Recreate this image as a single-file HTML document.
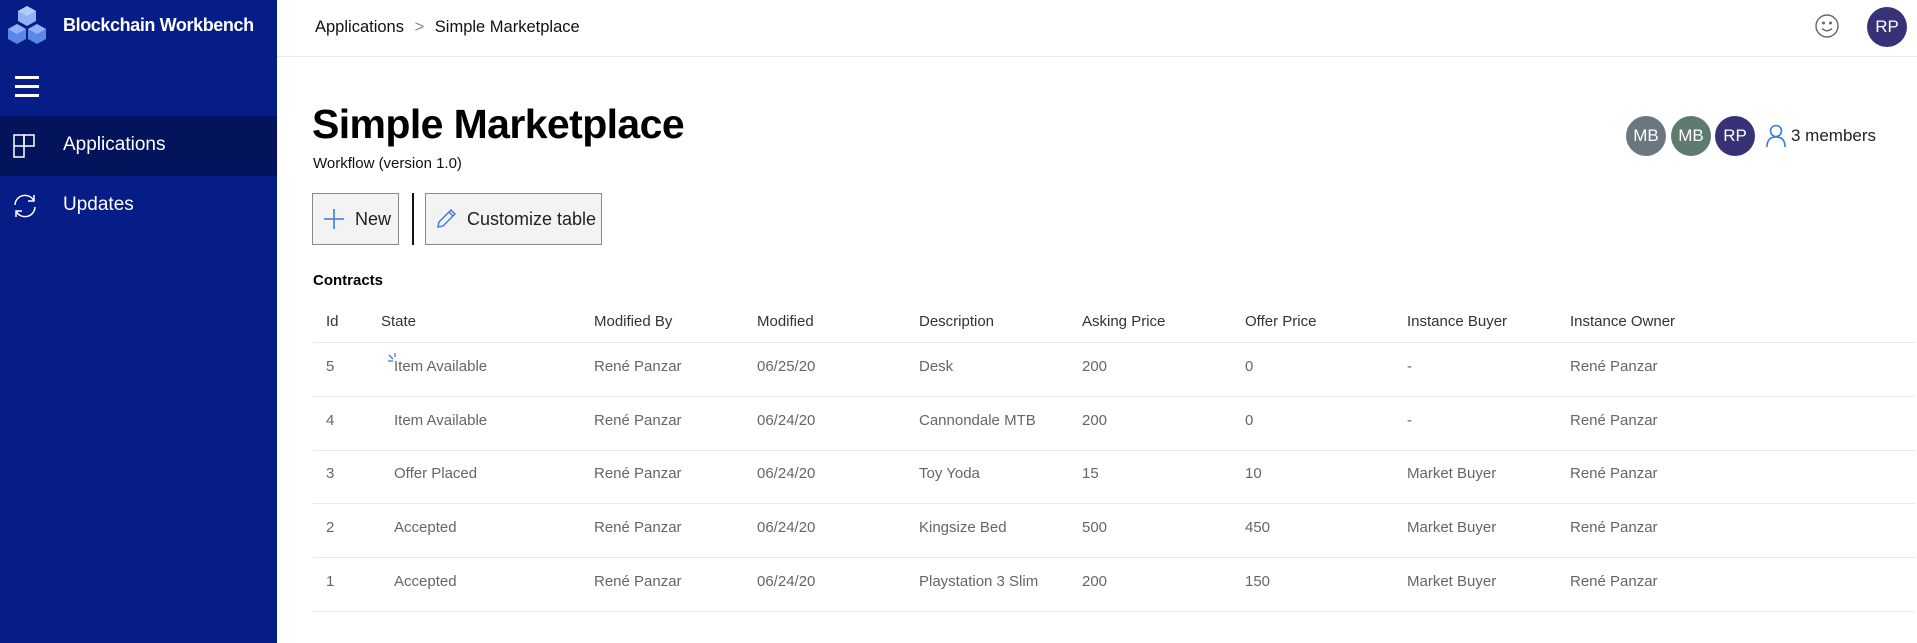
<!DOCTYPE html>
<html><head><meta charset="utf-8"><style>
*{margin:0;padding:0;box-sizing:border-box}
body{width:1917px;height:643px;overflow:hidden;font-family:"Liberation Sans",sans-serif;background:#fff;position:relative;color:#000}
.abs{position:absolute;white-space:nowrap}
#side{position:absolute;left:0;top:0;width:277px;height:643px;background:#061c86}
.av{position:absolute;border-radius:50%;color:#fff;font-size:17px;display:flex;align-items:center;justify-content:center;width:40px;height:40px}
.btn{position:absolute;top:193px;height:52px;border:1px solid #8a8a8a;background:#f3f3f3;font-size:18px;color:#222;display:flex;align-items:center}
.th{position:absolute;top:313px;font-size:15px;color:#333}
.td{position:absolute;font-size:15px;color:#666}
.line{position:absolute;left:313px;width:1602px;height:1px;background:#e8e8e8}
</style></head><body>
<div id="side">
<svg class="abs" style="left:5px;top:5px" width="44" height="42" viewBox="0 0 44 42">
<polygon points="22,1 31,6 31,16 22,21 13,16 13,6" fill="#8fb1f5"/>
<polygon points="22,1 31,6 22,11 13,6" fill="#b5cbf8"/>
<polygon points="12,19 21,24 21,34 12,39 3,34 3,24" fill="#5b87ea"/>
<polygon points="12,19 21,24 12,29 3,24" fill="#8fb1f5"/>
<polygon points="32,19 41,24 41,34 32,39 23,34 23,24" fill="#5b87ea"/>
<polygon points="32,19 41,24 32,29 23,24" fill="#8fb1f5"/>
</svg>
<div class="abs" style="left:63px;top:15px;font-size:18px;color:#fff;font-weight:bold;letter-spacing:-0.4px">Blockchain Workbench</div>
<div class="abs" style="left:15px;top:76px;width:24px;height:3px;background:#fff"></div>
<div class="abs" style="left:15px;top:85px;width:24px;height:3px;background:#fff"></div>
<div class="abs" style="left:15px;top:94px;width:24px;height:3px;background:#fff"></div>
<div class="abs" style="left:0;top:116px;width:277px;height:60px;background:#03135c"></div>
<svg class="abs" style="left:13px;top:134px" width="22" height="24" viewBox="0 0 22 24" fill="none" stroke="#fff" stroke-width="1.5"><rect x="1" y="1" width="10" height="22"/><rect x="11" y="1" width="10" height="11"/><line x1="1" y1="12" x2="11" y2="12"/></svg>
<div class="abs" style="left:63px;top:134px;font-size:19px;color:#fff">Applications</div>
<svg class="abs" style="left:12px;top:193px" width="26" height="26" viewBox="0 0 26 26" fill="none" stroke="#fff" stroke-width="1.5"><path d="M3 12 A10 10 0 0 1 22 8"/><path d="M23 14 A10 10 0 0 1 4 18"/><path d="M22 2 V8 H16"/><path d="M4 24 V18 H10"/></svg>
<div class="abs" style="left:63px;top:194px;font-size:19px;color:#fff">Updates</div>
</div>
<div class="abs" style="left:277px;top:56px;width:1640px;height:1px;background:#ececec"></div>
<div class="abs" style="left:315px;top:18px;font-size:16.5px;color:#111">Applications <span style="color:#888;margin:0 6px">&gt;</span> Simple Marketplace</div>
<svg class="abs" style="left:1814px;top:13px" width="26" height="26" viewBox="0 0 26 26" fill="none" stroke="#666" stroke-width="1.4"><circle cx="13" cy="13" r="11"/><circle cx="9.5" cy="10" r=".8" fill="#666"/><circle cx="16.5" cy="10" r=".8" fill="#666"/><path d="M8 15.5 Q13 20 18 15.5"/></svg>
<div class="av" style="left:1867px;top:7px;background:#373277">RP</div>
<div class="abs" style="left:312px;top:101px;font-size:41px;font-weight:bold;letter-spacing:-0.6px">Simple Marketplace</div>
<div class="abs" style="left:313px;top:155px;font-size:15px;color:#111">Workflow (version 1.0)</div>
<div class="av" style="left:1626px;top:116px;background:#6b7780">MB</div>
<div class="av" style="left:1671px;top:116px;background:#5f7a6e">MB</div>
<div class="av" style="left:1715px;top:116px;background:#373277">RP</div>
<svg class="abs" style="left:1766px;top:124px" width="20" height="24" viewBox="0 0 20 24" fill="none" stroke="#3b7bd8" stroke-width="1.6"><circle cx="10" cy="7" r="5.5"/><path d="M1 23 Q1 13 10 13 Q19 13 19 23"/></svg>
<div class="abs" style="left:1791px;top:126px;font-size:17px;color:#222">3 members</div>
<div class="btn" style="left:312px;width:87px"><svg style="margin-left:9px" width="24" height="24" viewBox="0 0 24 24" stroke="#3b7bd8" stroke-width="1.6"><line x1="12" y1="2" x2="12" y2="22"/><line x1="2" y1="12" x2="22" y2="12"/></svg><span style="margin-left:9px">New</span></div>
<div class="abs" style="left:412px;top:193px;width:2px;height:52px;background:#111"></div>
<div class="btn" style="left:425px;width:177px"><svg style="margin-left:9px" width="22" height="22" viewBox="0 0 22 22" fill="none" stroke="#3b7bd8" stroke-width="1.4"><path d="M3 19 L4 14 L16 2 L20 6 L8 18 Z M14 4 L18 8"/></svg><span style="margin-left:10px">Customize table</span></div>
<div class="abs" style="left:313px;top:272px;font-size:15px;font-weight:bold">Contracts</div>
<div class="th" style="left:326px">Id</div><div class="th" style="left:381px">State</div><div class="th" style="left:594px">Modified By</div><div class="th" style="left:757px">Modified</div><div class="th" style="left:919px">Description</div><div class="th" style="left:1082px">Asking Price</div><div class="th" style="left:1245px">Offer Price</div><div class="th" style="left:1407px">Instance Buyer</div><div class="th" style="left:1570px">Instance Owner</div>
<div class="line" style="top:342px"></div>
<svg class="abs" style="left:387px;top:352px" width="14" height="12" viewBox="0 0 14 12" stroke="#3b7bd8" stroke-width="1.3"><line x1="1" y1="9" x2="6" y2="9"/><line x1="2" y1="3" x2="6" y2="7"/><line x1="8" y1="1" x2="8" y2="5"/></svg>
<div class="td" style="left:326px;top:358px">5</div><div class="td" style="left:394px;top:358px">Item Available</div><div class="td" style="left:594px;top:358px">René Panzar</div><div class="td" style="left:757px;top:358px">06/25/20</div><div class="td" style="left:919px;top:358px">Desk</div><div class="td" style="left:1082px;top:358px">200</div><div class="td" style="left:1245px;top:358px">0</div><div class="td" style="left:1407px;top:358px">-</div><div class="td" style="left:1570px;top:358px">René Panzar</div>
<div class="line" style="top:396px"></div>
<div class="td" style="left:326px;top:412px">4</div><div class="td" style="left:394px;top:412px">Item Available</div><div class="td" style="left:594px;top:412px">René Panzar</div><div class="td" style="left:757px;top:412px">06/24/20</div><div class="td" style="left:919px;top:412px">Cannondale MTB</div><div class="td" style="left:1082px;top:412px">200</div><div class="td" style="left:1245px;top:412px">0</div><div class="td" style="left:1407px;top:412px">-</div><div class="td" style="left:1570px;top:412px">René Panzar</div>
<div class="line" style="top:450px"></div>
<div class="td" style="left:326px;top:465px">3</div><div class="td" style="left:394px;top:465px">Offer Placed</div><div class="td" style="left:594px;top:465px">René Panzar</div><div class="td" style="left:757px;top:465px">06/24/20</div><div class="td" style="left:919px;top:465px">Toy Yoda</div><div class="td" style="left:1082px;top:465px">15</div><div class="td" style="left:1245px;top:465px">10</div><div class="td" style="left:1407px;top:465px">Market Buyer</div><div class="td" style="left:1570px;top:465px">René Panzar</div>
<div class="line" style="top:503px"></div>
<div class="td" style="left:326px;top:519px">2</div><div class="td" style="left:394px;top:519px">Accepted</div><div class="td" style="left:594px;top:519px">René Panzar</div><div class="td" style="left:757px;top:519px">06/24/20</div><div class="td" style="left:919px;top:519px">Kingsize Bed</div><div class="td" style="left:1082px;top:519px">500</div><div class="td" style="left:1245px;top:519px">450</div><div class="td" style="left:1407px;top:519px">Market Buyer</div><div class="td" style="left:1570px;top:519px">René Panzar</div>
<div class="line" style="top:557px"></div>
<div class="td" style="left:326px;top:573px">1</div><div class="td" style="left:394px;top:573px">Accepted</div><div class="td" style="left:594px;top:573px">René Panzar</div><div class="td" style="left:757px;top:573px">06/24/20</div><div class="td" style="left:919px;top:573px">Playstation 3 Slim</div><div class="td" style="left:1082px;top:573px">200</div><div class="td" style="left:1245px;top:573px">150</div><div class="td" style="left:1407px;top:573px">Market Buyer</div><div class="td" style="left:1570px;top:573px">René Panzar</div>
<div class="line" style="top:611px"></div>
</body></html>
